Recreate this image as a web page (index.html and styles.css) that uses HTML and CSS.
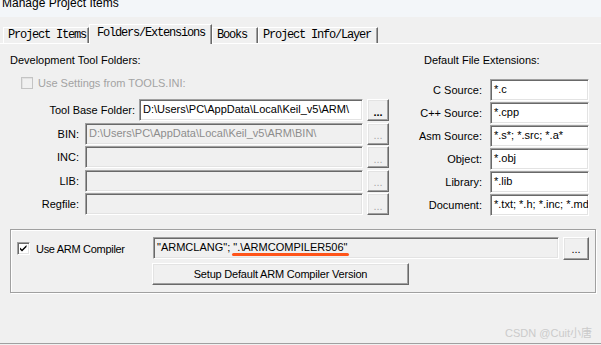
FILE: index.html
```html
<!DOCTYPE html>
<html lang="en">
<head>
  <meta charset="UTF-8" />
  <title>Manage Project Items</title>
  <link rel="stylesheet" href="styles.css">
</head>
<body>
  <div class="titlebar"><span>Manage Project Items</span></div>

  <div class="tabs">
    <div class="tab t1">Project Items</div>
    <div class="tab sel">Folders/Extensions</div>
    <div class="tab t3">Books</div>
    <div class="tab t4">Project Info/Layer</div>
  </div>

  <div class="panel">
    <div class="top">
      <div class="folders">
        <div class="heading">Development Tool Folders:</div>
        <div class="chk-row disabled">
          <span class="chk"></span>
          <span>Use Settings from TOOLS.INI:</span>
        </div>
        <div class="rows">
          <div class="row base">
            <label>Tool Base Folder:</label>
            <div class="edit">D:\Users\PC\AppData\Local\Keil_v5\ARM\</div>
            <button class="btn dots">...</button>
          </div>
          <div class="row">
            <label>BIN:</label>
            <div class="edit off">D:\Users\PC\AppData\Local\Keil_v5\ARM\BIN\</div>
            <button class="btn dots off">...</button>
          </div>
          <div class="row">
            <label>INC:</label>
            <div class="edit off"></div>
            <button class="btn dots off">...</button>
          </div>
          <div class="row">
            <label>LIB:</label>
            <div class="edit off"></div>
            <button class="btn dots off">...</button>
          </div>
          <div class="row">
            <label>Regfile:</label>
            <div class="edit off"></div>
            <button class="btn dots off">...</button>
          </div>
        </div>
      </div>

      <div class="exts">
        <div class="heading">Default File Extensions:</div>
        <div class="rows ext-rows">
          <div class="row"><label>C Source:</label><div class="edit">*.c</div></div>
          <div class="row"><label>C++ Source:</label><div class="edit">*.cpp</div></div>
          <div class="row"><label>Asm Source:</label><div class="edit">*.s*; *.src; *.a*</div></div>
          <div class="row"><label>Object:</label><div class="edit">*.obj</div></div>
          <div class="row"><label>Library:</label><div class="edit">*.lib</div></div>
          <div class="row"><label>Document:</label><div class="edit">*.txt; *.h; *.inc; *.md</div></div>
        </div>
      </div>
    </div>

    <div class="group">
      <div class="arm-left">
        <span class="chk on">
          <svg width="11" height="11" viewBox="0 0 11 11"><path d="M2 4.5 L4 6.5 L8.5 2 L8.5 4 L4 8.5 L2 6.5 Z" fill="#000"/></svg>
        </span>
        <span class="narrow">Use ARM Compiler</span>
      </div>
      <div class="arm-right">
        <div class="arm-row">
          <div class="edit field">"ARMCLANG"; <span class="mark">".\ARMCOMPILER506"</span></div>
          <button class="btn more">...</button>
        </div>
        <button class="btn setup">Setup Default ARM Compiler Version</button>
      </div>
    </div>
  </div>

  <div class="foot">CSDN @Cuit小唐</div>
</body>
</html>
```

FILE: styles.css
```css
body {
  margin: 0;
  width: 601px;
  height: 345px;
  overflow: hidden;
  background: #f0f0f0;
  color: #000;
  font-family: "Liberation Sans", Arial, sans-serif;
  font-size: 11px;
}

.titlebar {
  height: 17px;
  overflow: hidden;
  padding-left: 2px;
  background: #f3f6f9;
  font-size: 12px;
  line-height: 12px;
}

.titlebar span {
  display: block;
  margin-top: -3px;
}

/* tabs */
.tabs {
  display: flex;
  align-items: flex-end;
  height: 26px;
  padding-left: 3px;
  border-bottom: 1px solid #fff;
  font-family: "Liberation Mono", monospace;
  font-size: 12px;
  letter-spacing: -1.2px;
}

.tab {
  box-sizing: border-box;
  height: 16px;
  line-height: 15px;
  padding-left: 4px;
  border: 1px solid #fff;
  border-bottom: none;
  border-right-color: #696969;
  box-shadow: inset -1px 0 #a0a0a0;
  white-space: nowrap;
}

.t1 { width: 86px; }
.t3 { width: 46px; }
.t4 { width: 120px; }

.tab.sel {
  position: relative;
  width: 123px;
  height: 20px;
  margin-bottom: -1px;
  padding-left: 7px;
  line-height: 16px;
  background: #f0f0f0;
}

/* panel */
.panel {
  padding: 10px 5px 0 10px;
}

.top {
  display: flex;
  justify-content: space-between;
  padding-right: 7px;
}

.folders {
  width: 379px;
}

.exts {
  width: 189px;
}

.heading {
  height: 13px;
  line-height: 13px;
}

.exts .heading {
  padding-left: 24px;
}

.chk-row {
  display: flex;
  align-items: center;
  gap: 5px;
  height: 12px;
  margin-top: 10px;
  padding-left: 11px;
}

.disabled {
  color: #a3a3a3;
}

.chk {
  box-sizing: border-box;
  display: flex;
  align-items: center;
  justify-content: center;
  width: 12px;
  height: 12px;
  border: 1px solid #c4c4c4;
  background: #f0f0f0;
  box-shadow: inset 1px 1px #e2e2e2;
}

.chk.on {
  width: 13px;
  height: 13px;
  border-color: #a0a0a0 #fff #fff #a0a0a0;
  background: #fff;
  box-shadow: inset 1px 1px #696969, inset -1px -1px #e3e3e3;
}

.narrow {
  letter-spacing: -0.3px;
}

.rows {
  display: flex;
  flex-direction: column;
  gap: 1.5px;
  margin-top: 10px;
}

.ext-rows {
  gap: 1px;
  margin-top: 12px;
}

.row {
  display: flex;
  align-items: center;
  height: 22px;
}

.row label {
  width: 69px;
  margin-right: 6px;
  text-align: right;
}

.row.base label {
  width: 125px;
  margin-right: 4px;
}

.exts .row label {
  width: 82px;
  margin-right: 8px;
}

.edit {
  box-sizing: border-box;
  flex: 1;
  height: 22px;
  padding-left: 3px;
  line-height: 19px;
  white-space: nowrap;
  overflow: hidden;
  background: #fff;
  border: 1px solid;
  border-color: #a0a0a0 #fff #fff #a0a0a0;
  box-shadow: inset 1px 1px #696969, inset -1px -1px #e3e3e3;
}

.edit.off {
  background: #f0f0f0;
  color: #8d8d8d;
}

.btn {
  box-sizing: border-box;
  width: 22px;
  height: 22px;
  margin-left: 4px;
  padding: 0;
  background: #f0f0f0;
  color: #000;
  font-family: inherit;
  font-size: 11px;
  border: 1px solid;
  border-color: #fff #696969 #696969 #fff;
  box-shadow: inset -1px -1px #a0a0a0, inset 1px 1px #e3e3e3;
}

.dots {
  font-weight: bold;
  padding-top: 3px;
}

.dots.off {
  color: #a8a8a8;
  font-weight: normal;
}

/* ARM compiler group */
.group {
  display: flex;
  margin-top: 13px;
  padding: 7px 6px;
  border: 1px solid #a0a0a0;
  box-shadow: inset 1px 1px #fff, 1px 1px #fff;
}

.arm-left {
  display: flex;
  align-items: center;
  gap: 6px;
  width: 136px;
  height: 23px;
}

.arm-right {
  flex: 1;
}

.arm-row {
  display: flex;
  align-items: flex-start;
}

.field {
  flex: none;
  width: 406px;
  background: #f0f0f0;
}

.mark {
  position: relative;
}

.mark::after {
  content: "";
  position: absolute;
  left: -1px;
  right: -2px;
  bottom: -3px;
  height: 3px;
  border-radius: 2px;
  background: #ff5419;
}

.more {
  width: 26px;
  height: 23px;
}

.setup {
  display: block;
  width: 257px;
  height: 22px;
  margin: 3px 0 0 -1px;
  letter-spacing: -0.2px;
}

.foot {
  box-sizing: border-box;
  height: 51px;
  padding: 33px 9px 0 0;
  border-bottom: 1px solid #a0a0a0;
  text-align: right;
  line-height: 14px;
  color: #cbcbcb;
  font-family: "Liberation Sans", "Noto Sans CJK SC", sans-serif;
}
```
